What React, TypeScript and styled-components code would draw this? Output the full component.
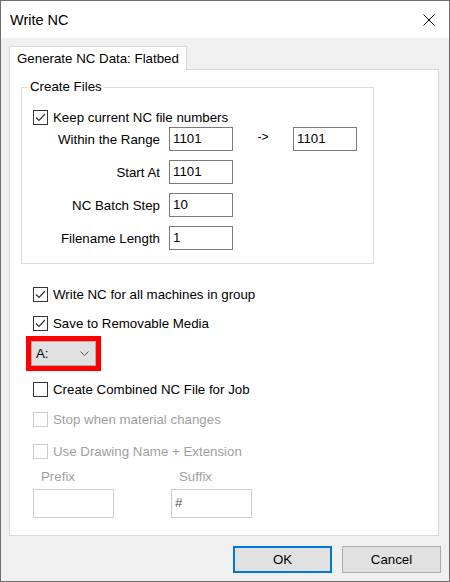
import React from "react";
import styled, { createGlobalStyle } from "styled-components";

const GlobalStyle = createGlobalStyle`
  html, body {
    margin: 0;
    padding: 0;
    background: #ffffff;
  }
  body {
    font-family: "Liberation Sans", Arial, sans-serif;
    font-size: 13.3px;
    color: #000000;
  }
  * {
    box-sizing: border-box;
  }
`;

const Window = styled.div`
  width: 450px;
  height: 582px;
  border: 1px solid #6e6e6e;
  background: #f0f0f0;
  display: flex;
  flex-direction: column;
  overflow: hidden;
`;

const TitleBar = styled.div`
  height: 37px;
  flex: none;
  background: #ffffff;
  display: flex;
  align-items: center;
  justify-content: space-between;
  padding: 0 14px 0 9px;
`;

const Title = styled.span`
  font-size: 14.5px;
`;

const Body = styled.div`
  flex: 1;
  display: flex;
  flex-direction: column;
  padding: 8px 8px 0 8px;
`;

const TabStrip = styled.div`
  display: flex;
  height: 23px;
`;

const Tab = styled.div`
  position: relative;
  z-index: 1;
  height: 24px;
  padding: 0 7px;
  display: flex;
  align-items: center;
  background: #ffffff;
  border: 1px solid #d9d9d9;
  border-bottom: none;
`;

const Panel = styled.div`
  width: 430px;
  height: 467px;
  background: #ffffff;
  border: 1px solid #d9d9d9;
  padding-top: 9px;
  display: flex;
  flex-direction: column;
`;

const Group = styled.fieldset`
  margin: 0 0 0 11px;
  padding: 0;
  width: 353px;
  min-width: 0;
  border: 1px solid #dcdcdc;
`;

const Legend = styled.legend`
  margin-left: 6px;
  padding: 0 2px;
  line-height: 16px;
`;

const GroupBody = styled.div`
  padding: 12px 11px 13px 11px;
  display: flex;
  flex-direction: column;
`;

const FieldGrid = styled.div`
  display: grid;
  grid-template-columns: 127px 64px 42px 64px;
  column-gap: 9px;
  row-gap: 9px;
  grid-auto-rows: 24px;
  align-items: center;
`;

const FieldLabel = styled.span`
  text-align: right;
  white-space: nowrap;
`;

const Arrow = styled.span`
  justify-self: center;
  margin-top: -5px;
  font-size: 12px;
`;

const TextBox = styled.input<{ $disabled?: boolean; $w?: number; $h?: number }>`
  width: ${(p) => p.$w ?? 64}px;
  height: ${(p) => p.$h ?? 24}px;
  margin: 0;
  padding: 0 0 2px 3px;
  border: 1px solid ${(p) => (p.$disabled ? "#cccccc" : "#7a7a7a")};
  border-radius: 0;
  background: #ffffff;
  font-family: inherit;
  font-size: 13.3px;
  color: ${(p) => (p.$disabled ? "#555555" : "#000000")};
  outline: none;
`;

const Options = styled.div`
  display: flex;
  flex-direction: column;
  padding-left: 23px;
`;

const CheckRow = styled.div<{ $mt?: number; $disabled?: boolean }>`
  display: flex;
  align-items: center;
  gap: 5px;
  height: 20px;
  margin-top: ${(p) => p.$mt ?? 0}px;
  color: ${(p) => (p.$disabled ? "#a0a0a0" : "#000000")};
  white-space: nowrap;
`;

const Box = styled.span<{ $disabled?: boolean }>`
  width: 15px;
  height: 15px;
  flex: none;
  display: flex;
  align-items: center;
  justify-content: center;
  border: 1px solid ${(p) => (p.$disabled ? "#cccccc" : "#333333")};
  background: #ffffff;
`;

const Highlight = styled.div`
  align-self: flex-start;
  margin: 3px 0 0 -7px;
  border: 5px solid #ff0000;
`;

const Combo = styled.div`
  width: 65px;
  height: 25px;
  display: flex;
  align-items: center;
  justify-content: space-between;
  padding: 0 6px 0 4px;
  background: #e1e1e1;
  border: 1px solid #adadad;
`;

const AffixRow = styled.div`
  display: flex;
  gap: 57px;
  margin-top: 8px;
`;

const AffixField = styled.div`
  display: flex;
  flex-direction: column;
  gap: 4px;
`;

const AffixLabel = styled.span`
  padding-left: 8px;
  line-height: 16px;
  color: #a0a0a0;
`;

const ButtonRow = styled.div`
  display: flex;
  justify-content: flex-end;
  gap: 10px;
  margin-top: 10px;
`;

const Button = styled.button<{ $default?: boolean }>`
  width: 99px;
  height: 27px;
  margin: 0;
  padding: 0;
  font-family: inherit;
  font-size: 13.3px;
  color: #000000;
  background: #e1e1e1;
  border: ${(p) => (p.$default ? "2px solid #0078d7" : "1px solid #adadad")};
  border-radius: 0;
`;

const Check = ({ checked, disabled }: { checked?: boolean; disabled?: boolean }) => (
  <Box $disabled={disabled}>
    {checked ? (
      <svg width="13" height="13" viewBox="0 0 13 13">
        <polyline
          points="2,6.5 5,9.5 11,3"
          fill="none"
          stroke="#333333"
          strokeWidth="1.2"
        />
      </svg>
    ) : null}
  </Box>
);

const CheckOption = ({
  label,
  checked,
  disabled,
  mt,
}: {
  label: string;
  checked?: boolean;
  disabled?: boolean;
  mt?: number;
}) => (
  <CheckRow $mt={mt} $disabled={disabled}>
    <Check checked={checked} disabled={disabled} />
    <span>{label}</span>
  </CheckRow>
);

const App = () => {
  return (
    <>
      <GlobalStyle />
      <Window>
        <TitleBar>
          <Title>Write NC</Title>
          <svg width="12" height="12" viewBox="0 0 12 12">
            <path d="M0.5 0.5 L11.5 11.5 M11.5 0.5 L0.5 11.5" stroke="#000" strokeWidth="1" />
          </svg>
        </TitleBar>
        <Body>
          <TabStrip>
            <Tab>Generate NC Data: Flatbed</Tab>
          </TabStrip>
          <Panel>
            <Group>
              <Legend>Create Files</Legend>
              <GroupBody>
                <CheckOption label="Keep current NC file numbers" checked />
                <FieldGrid>
                  <FieldLabel>Within the Range</FieldLabel>
                  <TextBox readOnly defaultValue="1101" />
                  <Arrow>-&gt;</Arrow>
                  <TextBox readOnly defaultValue="1101" />

                  <FieldLabel>Start At</FieldLabel>
                  <TextBox readOnly defaultValue="1101" />
                  <span />
                  <span />

                  <FieldLabel>NC Batch Step</FieldLabel>
                  <TextBox readOnly defaultValue="10" />
                  <span />
                  <span />

                  <FieldLabel>Filename Length</FieldLabel>
                  <TextBox readOnly defaultValue="1" />
                </FieldGrid>
              </GroupBody>
            </Group>

            <Options>
              <CheckOption label="Write NC for all machines in group" checked mt={20} />
              <CheckOption label="Save to Removable Media" checked mt={9} />
              <Highlight>
                <Combo>
                  <span>A:</span>
                  <svg width="9" height="5" viewBox="0 0 9 5">
                    <polyline points="0.5,0.5 4.5,4.5 8.5,0.5" fill="none" stroke="#555" strokeWidth="1" />
                  </svg>
                </Combo>
              </Highlight>
              <CheckOption label="Create Combined NC File for Job" mt={8} />
              <CheckOption label="Stop when material changes" disabled mt={10} />
              <CheckOption label="Use Drawing Name + Extension" disabled mt={12} />
              <AffixRow>
                <AffixField>
                  <AffixLabel>Prefix</AffixLabel>
                  <TextBox readOnly $disabled $w={81} $h={29} defaultValue="" />
                </AffixField>
                <AffixField>
                  <AffixLabel>Suffix</AffixLabel>
                  <TextBox readOnly $disabled $w={81} $h={29} defaultValue="#" />
                </AffixField>
              </AffixRow>
            </Options>
          </Panel>
          <ButtonRow>
            <Button $default>OK</Button>
            <Button>Cancel</Button>
          </ButtonRow>
        </Body>
      </Window>
    </>
  );
};

export default App;
